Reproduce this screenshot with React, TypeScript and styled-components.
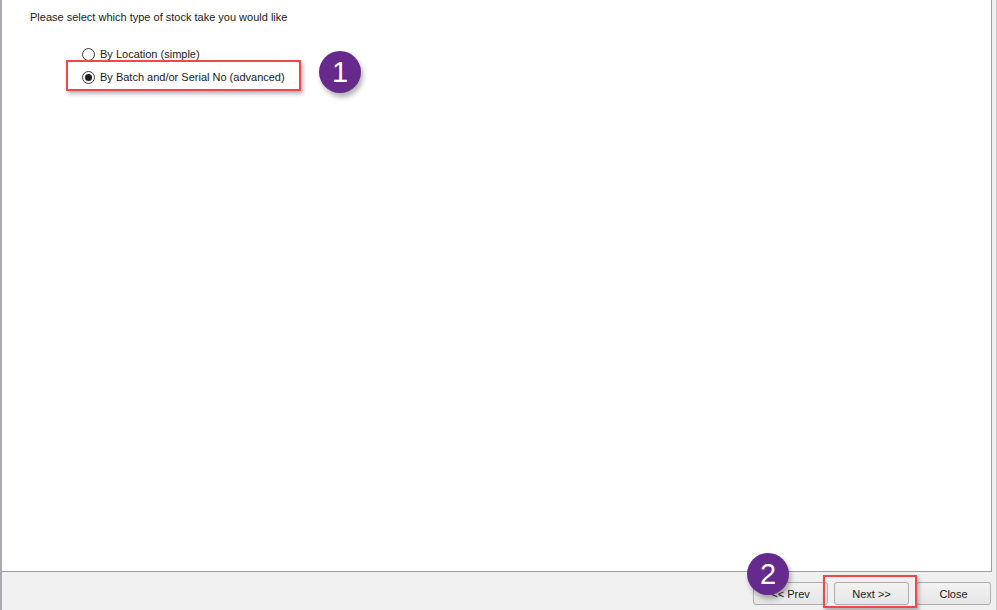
import React from "react";
import styled, { createGlobalStyle } from "styled-components";

const Global = createGlobalStyle`
  html, body { margin: 0; padding: 0; background: #f0f0f0; }
  body { font-family: "Segoe UI", "Liberation Sans", Arial, sans-serif; }
  #root { width: 997px; height: 610px; }
`;

const Window = styled.div`
  width: 997px;
  height: 610px;
  display: flex;
  background: #f0f0f0;
  overflow: hidden;
  box-sizing: border-box;
  border-right: 1px solid #c8c8c8;
`;

const LeftEdge = styled.div`
  width: 2px;
  flex: none;
  background: #a9a9b0;
`;

const Main = styled.div`
  flex: 1;
  display: flex;
  flex-direction: column;
  min-width: 0;
`;

const Panel = styled.div`
  height: 572px;
  box-sizing: border-box;
  margin-right: 4px;
  background: #ffffff;
  border-right: 1px solid #a0a0a0;
  border-bottom: 1px solid #a0a0a0;
  padding: 10px 0 0 28px;
  position: relative;
`;

const Prompt = styled.div`
  font-size: 11px;
  color: #1a1a1a;
  line-height: 14px;
`;

const Options = styled.div`
  margin-top: 22px;
  padding-left: 52px;
  display: flex;
  flex-direction: column;
  gap: 8px;
`;

const OptionRow = styled.label`
  display: flex;
  align-items: center;
  gap: 5px;
  font-size: 11px;
  color: #1a1a1a;
  line-height: 14px;
  height: 14px;
  position: relative;
  padding-top: 1px;
`;

const Radio = styled.span<{ $checked?: boolean }>`
  width: 13px;
  height: 13px;
  flex: none;
  box-sizing: border-box;
  border-radius: 50%;
  border: 1px solid #3c3c3c;
  background: #fff;
  display: flex;
  align-items: center;
  justify-content: center;
  &::after {
    content: "";
    width: 7px;
    height: 7px;
    border-radius: 50%;
    background: ${(p) => (p.$checked ? "#1f1f1f" : "transparent")};
  }
`;

const Highlight = styled.span<{ $l: number; $t: number; $w: number; $h: number }>`
  position: absolute;
  left: ${(p) => p.$l}px;
  top: ${(p) => p.$t}px;
  width: ${(p) => p.$w}px;
  height: ${(p) => p.$h}px;
  box-sizing: border-box;
  border: 2px solid #f04848;
  box-shadow: 2px 3px 4px rgba(0, 0, 0, 0.28);
  pointer-events: none;
`;

const Badge = styled.span<{ $l: number; $t: number }>`
  position: absolute;
  left: ${(p) => p.$l}px;
  top: ${(p) => p.$t}px;
  width: 42px;
  height: 42px;
  border-radius: 50%;
  background: #662a8c;
  color: #fff;
  font-family: "Liberation Sans", Arial, sans-serif;
  font-size: 29px;
  display: flex;
  align-items: center;
  justify-content: center;
  box-shadow: 2px 4px 5px rgba(0, 0, 0, 0.3);
  z-index: 2;
`;

const Footer = styled.div`
  flex: 1;
  display: flex;
  justify-content: flex-end;
  align-items: flex-start;
  padding: 10px 5px 0 0;
  position: relative;
`;

const Button = styled.button`
  width: 75px;
  height: 23px;
  box-sizing: border-box;
  border: 1px solid #adadad;
  border-radius: 3px;
  background: linear-gradient(#f2f2f2, #e6e6e6);
  font-family: "Segoe UI", "Liberation Sans", Arial, sans-serif;
  font-size: 11px;
  color: #1a1a1a;
  padding: 0;
`;

const NextWrap = styled.div`
  position: relative;
  margin: 0 7px 0 6px;
`;

export default function App() {
  return (
    <>
      <Global />
      <Window>
        <LeftEdge />
        <Main>
          <Panel>
            <Prompt>Please select which type of stock take you would like</Prompt>
            <Options>
              <OptionRow>
                <Radio />
                By Location (simple)
              </OptionRow>
              <OptionRow>
                <Radio $checked />
                By Batch and/or Serial No (advanced)
                <Highlight $l={-16} $t={-9} $w={235} $h={31} />
              </OptionRow>
            </Options>
            <Badge $l={317} $t={51}>1</Badge>
          </Panel>
          <Footer>
            <Badge $l={745} $t={-19}>2</Badge>
            <Button>&lt;&lt; Prev</Button>
            <NextWrap>
              <Button>Next &gt;&gt;</Button>
              <Highlight $l={-11} $t={-7} $w={94} $h={33} />
            </NextWrap>
            <Button>Close</Button>
          </Footer>
        </Main>
      </Window>
    </>
  );
}
